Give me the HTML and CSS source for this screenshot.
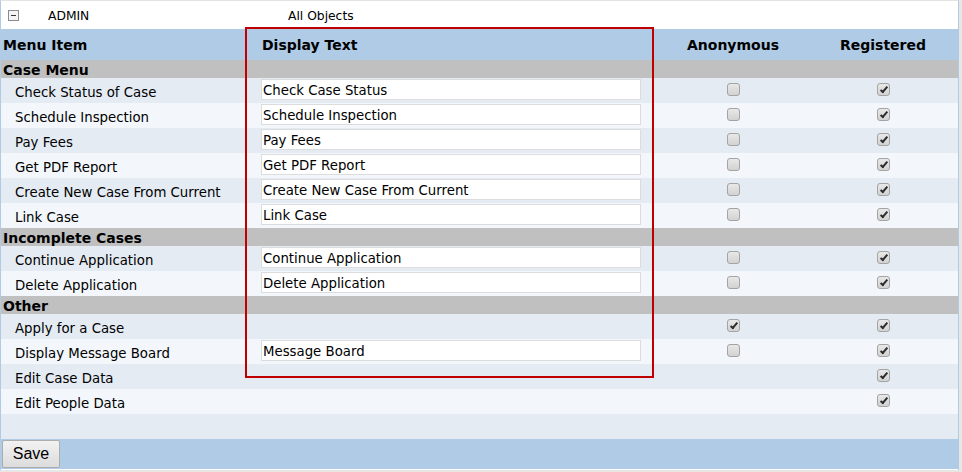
FILE: index.html
```html
<!DOCTYPE html>
<html lang="en">
<head>
    <meta charset="UTF-8">
    <title>Menu Permissions</title>
    <link rel="stylesheet" href="styles.css">
</head>
<body>
    <div class="frame">
        <div class="top-row">
            <span class="toggle"></span>
            <span class="role">ADMIN</span>
            <span class="scope">All Objects</span>
        </div>
        <table class="grid">
            <colgroup>
                <col class="col-item">
                <col class="col-text">
                <col class="col-check">
                <col class="col-check">
            </colgroup>
            <thead>
                <tr class="head">
                    <th class="left">Menu Item</th>
                    <th class="left text-head">Display Text</th>
                    <th>Anonymous</th>
                    <th>Registered</th>
                </tr>
            </thead>
            <tbody>
                <tr class="group"><td colspan="4">Case Menu</td></tr>
                <tr class="odd">
                    <td class="item">Check Status of Case</td>
                    <td class="text"><input type="text" value="Check Case Status"></td>
                    <td class="chk"><input type="checkbox" disabled></td>
                    <td class="chk"><input type="checkbox" checked disabled></td>
                </tr>
                <tr class="even">
                    <td class="item">Schedule Inspection</td>
                    <td class="text"><input type="text" value="Schedule Inspection"></td>
                    <td class="chk"><input type="checkbox" disabled></td>
                    <td class="chk"><input type="checkbox" checked disabled></td>
                </tr>
                <tr class="odd">
                    <td class="item">Pay Fees</td>
                    <td class="text"><input type="text" value="Pay Fees"></td>
                    <td class="chk"><input type="checkbox" disabled></td>
                    <td class="chk"><input type="checkbox" checked disabled></td>
                </tr>
                <tr class="even">
                    <td class="item">Get PDF Report</td>
                    <td class="text"><input type="text" value="Get PDF Report"></td>
                    <td class="chk"><input type="checkbox" disabled></td>
                    <td class="chk"><input type="checkbox" checked disabled></td>
                </tr>
                <tr class="odd">
                    <td class="item">Create New Case From Current</td>
                    <td class="text"><input type="text" value="Create New Case From Current"></td>
                    <td class="chk"><input type="checkbox" disabled></td>
                    <td class="chk"><input type="checkbox" checked disabled></td>
                </tr>
                <tr class="even">
                    <td class="item">Link Case</td>
                    <td class="text"><input type="text" value="Link Case"></td>
                    <td class="chk"><input type="checkbox" disabled></td>
                    <td class="chk"><input type="checkbox" checked disabled></td>
                </tr>
                <tr class="group"><td colspan="4">Incomplete Cases</td></tr>
                <tr class="odd">
                    <td class="item">Continue Application</td>
                    <td class="text"><input type="text" value="Continue Application"></td>
                    <td class="chk"><input type="checkbox" disabled></td>
                    <td class="chk"><input type="checkbox" checked disabled></td>
                </tr>
                <tr class="even">
                    <td class="item">Delete Application</td>
                    <td class="text"><input type="text" value="Delete Application"></td>
                    <td class="chk"><input type="checkbox" disabled></td>
                    <td class="chk"><input type="checkbox" checked disabled></td>
                </tr>
                <tr class="group"><td colspan="4">Other</td></tr>
                <tr class="odd">
                    <td class="item">Apply for a Case</td>
                    <td class="text"></td>
                    <td class="chk"><input type="checkbox" checked disabled></td>
                    <td class="chk"><input type="checkbox" checked disabled></td>
                </tr>
                <tr class="even">
                    <td class="item">Display Message Board</td>
                    <td class="text"><input type="text" value="Message Board"></td>
                    <td class="chk"><input type="checkbox" disabled></td>
                    <td class="chk"><input type="checkbox" checked disabled></td>
                </tr>
                <tr class="odd">
                    <td class="item">Edit Case Data</td>
                    <td class="text"></td>
                    <td class="chk"></td>
                    <td class="chk"><input type="checkbox" checked disabled></td>
                </tr>
                <tr class="even">
                    <td class="item">Edit People Data</td>
                    <td class="text"></td>
                    <td class="chk"></td>
                    <td class="chk"><input type="checkbox" checked disabled></td>
                </tr>
                <tr class="odd"><td colspan="4"></td></tr>
            </tbody>
            <tfoot>
                <tr class="foot">
                    <td colspan="4"><button>Save</button></td>
                </tr>
            </tfoot>
        </table>
        <div class="highlight"></div>
    </div>
</body>
</html>
```

FILE: styles.css
```css
body {
    margin: 0;
    background: #e6e6e6;
    font-family: "DejaVu Sans", Verdana, sans-serif;
    color: #000;
}
.frame {
    position: relative;
    width: 957px;
    height: 469px;
    background: #fff;
    border-top: 1px solid #e3e3e3;
    border-left: 1px solid #b0cbe6;
    border-right: 1px solid #b0cbe6;
}
.top-row {
    display: flex;
    align-items: center;
    height: 28px;
    padding-top: 1px;
    box-sizing: border-box;
    font-size: 12.3px;
    color: #000;
}
.toggle {
    position: relative;
    width: 9px;
    height: 9px;
    margin-left: 7px;
    border: 1px solid #8a8a8a;
    background: #f4f4f4;
}
.toggle::after {
    content: "";
    position: absolute;
    left: 2px;
    top: 4px;
    width: 5px;
    height: 1px;
    background: #333;
}
.role {
    margin-left: 29px;
    width: 240px;
}
.grid {
    width: 957px;
    border-collapse: collapse;
    table-layout: fixed;
    font-size: 13.3px;
}
.col-item { width: 254px; }
.col-text { width: 403px; }
.col-check { width: 150px; }
.grid td, .grid th {
    padding: 0;
}
.head {
    height: 31px;
}
.head th {
    background: #b0cbe6;
    font-size: 14px;
    font-weight: bold;
    text-align: center;
    padding-top: 1px;
}
.head th.left {
    text-align: left;
    padding-left: 2px;
}
.head th.text-head {
    padding-left: 7px;
}
.group {
    height: 18px;
}
.grid .group td {
    background: #c0c0c0;
    font-size: 14px;
    font-weight: bold;
    padding: 1px 0 0 2px;
    line-height: 16px;
}
.odd, .even {
    height: 25px;
}
.odd td {
    background: #e4ebf3;
}
.even td {
    background: #f3f7fb;
}
.grid td.item {
    padding: 3px 0 0 14px;
}
.grid td.text {
    vertical-align: top;
    padding: 1px 0 0 6px;
}
.text input {
    box-sizing: border-box;
    width: 380px;
    height: 21px;
    margin: 0;
    padding: 1px 1px 0;
    border: 1px solid #dcdcdc;
    background: #fff;
    font-family: "DejaVu Sans", Verdana, sans-serif;
    font-size: 13.3px;
    color: #000;
}
.chk {
    text-align: center;
}
.chk input {
    appearance: none;
    -webkit-appearance: none;
    box-sizing: border-box;
    width: 13px;
    height: 13px;
    margin: 0 0 0 1px;
    border: 1px solid #a4a4a4;
    border-radius: 3px;
    background: linear-gradient(#e8e8e8, #d2d2d2);
    vertical-align: middle;
    position: relative;
    top: -2px;
}
.chk input:checked::after {
    content: "";
    position: absolute;
    left: 4px;
    top: 1px;
    width: 2px;
    height: 6px;
    border-right: 2px solid #2b2b2b;
    border-bottom: 2px solid #2b2b2b;
    transform: rotate(40deg);
}
.foot {
    height: 30px;
}
.foot td {
    background: #b0cbe6;
    padding-left: 1px;
}
.foot button {
    display: block;
    width: 58px;
    height: 28px;
    font-family: "Liberation Sans", Arial, sans-serif;
    font-size: 16px;
    color: #000;
    background: linear-gradient(#f2f2f2, #dcdcdc);
    border: 1px solid #adadad;
    border-radius: 2px;
    padding: 0;
    cursor: pointer;
}
.highlight {
    position: absolute;
    left: 244px;
    top: 26px;
    width: 405px;
    height: 347px;
    border: 2px solid #c00000;
    pointer-events: none;
}
```
